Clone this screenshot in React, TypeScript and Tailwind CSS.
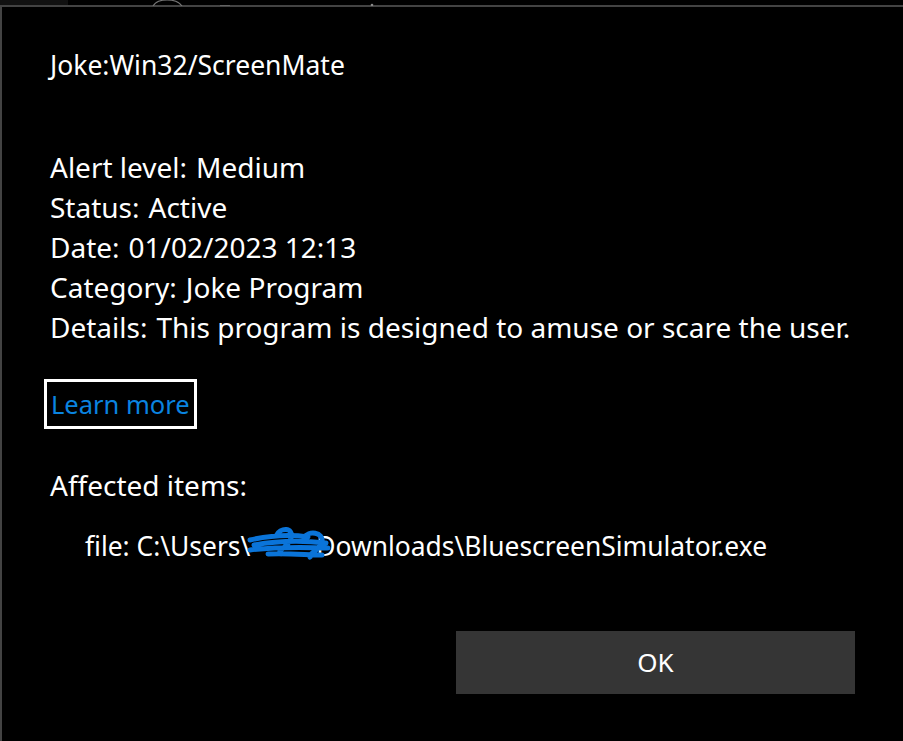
export default function App() {
  const lines: [string, string][] = [
    ["Alert level:", "Medium"],
    ["Status:", "Active"],
    ["Date:", "01/02/2023 12:13"],
    ["Category:", "Joke Program"],
    ["Details:", "This program is designed to amuse or scare the user."],
  ];

  return (
    <div className="relative w-[903px] h-[741px] bg-black overflow-hidden text-white font-['Noto_Sans',sans-serif]">
      {/* bit of the window behind */}
      <div className="flex h-[5px]">
        <div className="w-[68px] bg-[#111]" />
      </div>
      <svg className="absolute left-[150px] top-0" width="240" height="6" viewBox="0 0 240 6">
        <path d="M3 6 C8 -2 26 -2 32 6" stroke="#777" strokeWidth="1.2" fill="none" />
        <path d="M70 6 L80 6" stroke="#777" strokeWidth="1.2" />
        <circle cx="222" cy="5" r="1.3" fill="#888" />
      </svg>

      <div className="h-[736px] border-t-2 border-l-2 border-[#434343] pl-[48px] pr-[48px]">
        <div className="pt-[40px] text-[26.5px] leading-[36px] whitespace-nowrap">Joke:Win32/ScreenMate</div>

        <div className="mt-[64px] text-[28px] leading-[40px]">
          {lines.map(([k, v]) => (
            <div key={k} className="flex gap-[9px] whitespace-nowrap">
              <span>{k}</span>
              <span>{v}</span>
            </div>
          ))}
        </div>

        <div className="mt-[32px] -ml-[6px]">
          <div className="w-[153px] h-[50px] border-[3px] border-white pl-[4px] text-[25.5px] leading-[44px] text-[#0a84e0] whitespace-nowrap">
            Learn more
          </div>
        </div>

        <div className="mt-[38px] text-[28px] leading-[36px]">Affected items:</div>

        <div className="mt-[25px] ml-[35px] text-[26.4px] leading-[36px] whitespace-nowrap">
          file: C:\Users\
          <span className="relative inline-block w-[66px] h-[10px]">
            {/* scribbled out user name */}
            <svg className="absolute left-[-4px] top-[-22px]" width="86" height="36" viewBox="0 0 86 36">
              <path
                d="M4 16 C22 12 42 10 62 13 M8 21 C30 17 54 16 80 19 M4 26 C28 23 52 23 82 24 M22 30 C42 29 62 31 76 31 M30 12 C34 3 48 3 45 14 C42 24 30 26 35 30 M58 14 C62 6 78 8 76 18 C74 26 62 30 64 33"
                stroke="#0a74d9"
                strokeWidth="5"
                strokeLinecap="round"
                fill="none"
              />
            </svg>
          </span>
          Downloads\BluescreenSimulator.exe
        </div>

        <div className="flex justify-end mt-[67px]">
          <button className="w-[399px] h-[63px] bg-[#353535] text-[26px] text-white">OK</button>
        </div>
      </div>
    </div>
  );
}
